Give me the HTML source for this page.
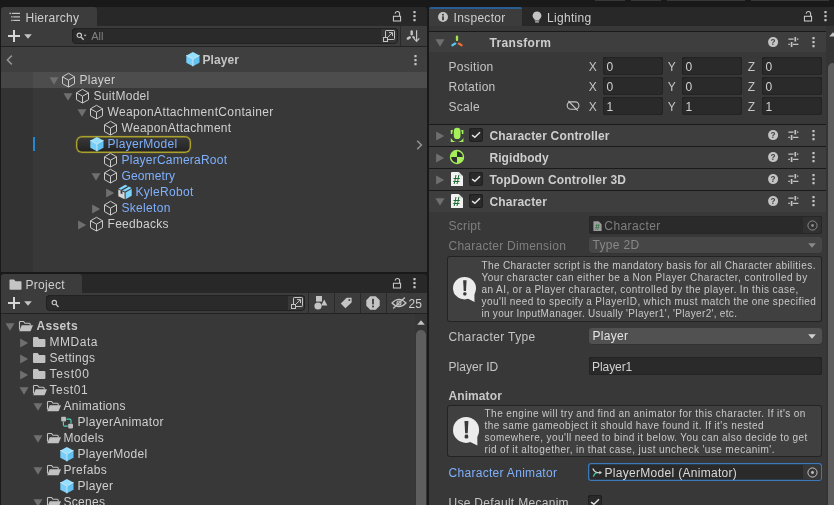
<!DOCTYPE html>
<html><head><meta charset="utf-8"><title>Unity Editor</title>
<style>
html,body{margin:0;padding:0;}
body{width:834px;height:505px;overflow:hidden;background:#191919;position:relative;font-family:"Liberation Sans",sans-serif;}
#root{position:absolute;left:0;top:0;width:834px;height:505px;overflow:hidden;will-change:transform;}
#root div,#root span,#root svg{position:absolute;}
.t{white-space:nowrap;}
.search{background:#2a2a2a;border-radius:4.5px;box-shadow:inset 0 0 0 1px #222, inset 0 1px 0 0 #121212;}
.field{background:#2a2a2a;border-radius:3px;box-shadow:inset 0 0 0 1px #232323, inset 0 1px 0 0 #151515;}
.drop{background:#515151;border-radius:3px;box-shadow:0 0.6px 0 0 #2c2c2c;}
</style></head><body><div id="root">
<div style="left:595px;top:0px;width:30px;height:1px;background:#383838;"></div>
<div style="left:631px;top:0px;width:30px;height:1px;background:#383838;"></div>
<div style="left:667px;top:0px;width:78px;height:1px;background:#383838;"></div>
<div style="left:751px;top:0px;width:78px;height:1px;background:#383838;"></div>
<div style="left:1px;top:7px;width:426px;height:19px;background:#282828;border-radius:3px 3px 0 0;"></div>
<div style="left:1px;top:7px;width:96px;height:19px;background:#3c3c3c;border-radius:3px 3px 0 0;"></div>
<svg style="left:9px;top:11.5px;" width="12" height="10" viewBox="0 0 12 10"><g fill="#c4c4c4"><rect x="0.5" y="0.7" width="1.4" height="1.4"/><rect x="2.8" y="0.8" width="8.2" height="1.2"/><rect x="2.2" y="4.2" width="1.4" height="1.4"/><rect x="4.2" y="4.3" width="6.8" height="1.2"/><rect x="2.2" y="7.7" width="1.4" height="1.4"/><rect x="4.2" y="7.8" width="6.8" height="1.2"/></g></svg>
<span class="t " style="left:25.5px;top:10px;line-height:16px;font-size:12px;font-weight:400;color:#cfcfcf;letter-spacing:0.26px;">Hierarchy</span>
<svg style="left:392px;top:10px;" width="11" height="13" viewBox="0 0 11 13"><rect x="1.45" y="6.3" width="7.1" height="4.7" fill="none" stroke="#c4c4c4" stroke-width="1.1"/><path d="M3.1 3.6 A2.25 2.25 0 0 1 7.6 4.05 V6" fill="none" stroke="#c4c4c4" stroke-width="1.1"/></svg>
<svg style="left:412.5px;top:11px;" width="3" height="11" viewBox="0 0 3 11"><rect x="0.4" y="0" width="2.2" height="2.3" rx="0.4" fill="#c4c4c4"/><rect x="0.4" y="4" width="2.2" height="2.3" rx="0.4" fill="#c4c4c4"/><rect x="0.4" y="8" width="2.2" height="2.3" rx="0.4" fill="#c4c4c4"/></svg>
<div style="left:1px;top:26px;width:426px;height:20px;background:#3c3c3c;"></div>
<div style="left:1px;top:46px;width:426px;height:1px;background:#232323;"></div>
<svg style="left:8px;top:30px;" width="12" height="12" viewBox="0 0 12 12"><path d="M6 0 V12 M0 6 H12" stroke="#d6d6d6" stroke-width="2"/></svg>
<svg style="left:24px;top:34px;" width="8" height="5" viewBox="0 0 8 5"><path d="M0.2 0.3 L7.8 0.3 L4 4.8 Z" fill="#c4c4c4"/></svg>
<div class="search" style="left:72px;top:28px;width:326px;height:16px;"></div>
<div style="left:381px;top:29px;width:16px;height:14px;background:#353535;border-radius:0 3px 3px 0;"></div>
<svg style="left:76px;top:31px;" width="12" height="10" viewBox="0 0 12 10"><circle cx="3.3" cy="4.3" r="2.2" fill="none" stroke="#c4c4c4" stroke-width="1.2"/><path d="M4.9 5.9 L7.7 8.8" stroke="#c4c4c4" stroke-width="1.4"/><path d="M7.6 3.7 h2.9 l-1.45 1.9 Z" fill="#c4c4c4"/></svg>
<span class="t " style="left:91.2px;top:28px;line-height:16px;font-size:11px;font-weight:400;color:#808080;letter-spacing:-0.012px;">All</span>
<svg style="left:383px;top:30px;" width="13" height="13" viewBox="0 0 13 13"><path d="M2.5 7 V1.2 a0.7 0.7 0 0 1 0.7 -0.7 H10.8 a0.7 0.7 0 0 1 0.7 0.7 V8.8 a0.7 0.7 0 0 1 -0.7 0.7 H5" fill="none" stroke="#c4c4c4" stroke-width="1"/><rect x="0.5" y="7.5" width="4" height="4" fill="none" stroke="#c4c4c4" stroke-width="1"/><path d="M4.8 7.3 L9.2 2.9 M6 2.6 H9.5 V6.1" fill="none" stroke="#c4c4c4" stroke-width="1"/></svg>
<div style="left:400px;top:26px;width:1px;height:20px;background:#2a2a2a;"></div>
<svg style="left:406px;top:29px;" width="15" height="14" viewBox="0 0 15 14"><g stroke="#c4c4c4" fill="none"><path d="M5.7 2.4 V5.2" stroke-width="2.4" stroke-linecap="round"/><path d="M3.8 8.4 L1.8 9.6" stroke-width="2.4" stroke-linecap="round"/><path d="M7.3 8.2 L7.9 8.6" stroke-width="2.2" stroke-linecap="round"/><path d="M10.6 1.2 V12.2 M7.9 9.4 L10.6 12.4 L13.3 9.4" stroke-width="1.2"/></g></svg>
<div style="left:1px;top:47px;width:426px;height:25px;background:#3f3f3f;"></div>
<svg style="left:6px;top:53.5px;" width="7" height="12" viewBox="0 0 7 12"><path d="M5.8 1.6 L1.4 6 L5.8 10.4" fill="none" stroke="#959595" stroke-width="1.5"/></svg>
<svg style="left:184.5px;top:51px;" width="16" height="16" viewBox="0 0 16 16"><path d="M7.9 0.9 L14.5 4.4 L7.9 8 L1.3 4.4 Z" fill="#96dfff"/><path d="M1.3 4.4 L7.9 8 L7.9 15.3 L1.3 11.7 Z" fill="#76cefa"/><path d="M14.5 4.4 L7.9 8 L7.9 15.3 L14.5 11.7 Z" fill="#62c1f1"/><path d="M1.3 4.4 L7.9 8 L14.5 4.4 M7.9 8 L7.9 15.3" fill="none" stroke="#d2f1ff" stroke-width="0.9"/></svg>
<span class="t " style="left:202.5px;top:52px;line-height:16px;font-size:12px;font-weight:700;color:#c6c6c6;letter-spacing:0.1px;">Player</span>
<svg style="left:413.5px;top:55px;" width="3" height="11" viewBox="0 0 3 11"><rect x="0.4" y="0" width="2.2" height="2.3" rx="0.4" fill="#c4c4c4"/><rect x="0.4" y="4" width="2.2" height="2.3" rx="0.4" fill="#c4c4c4"/><rect x="0.4" y="8" width="2.2" height="2.3" rx="0.4" fill="#c4c4c4"/></svg>
<div style="left:1px;top:72px;width:426px;height:200px;background:#383838;"></div>
<div style="left:1px;top:72px;width:32px;height:200px;background:#333333;"></div>
<div style="left:1px;top:72px;width:32px;height:16px;background:#464646;"></div>
<div style="left:33px;top:72px;width:394px;height:16px;background:#4d4d4d;"></div>
<div style="left:75.5px;top:135.5px;width:115.6px;height:17.5px;border-radius:6px;background:linear-gradient(#3a3a3a,#212121);box-shadow:inset 0 0 0 1.4px #aaa02e, 0 0 1.6px rgba(160,150,40,0.6);"></div>
<div style="left:33px;top:137px;width:2px;height:14px;background:#1f8bd6;"></div>
<svg style="left:48.5px;top:77px;" width="10" height="8" viewBox="0 0 10 8"><path d="M0.5 0.3 L9.5 0.3 L5 7.8 Z" fill="#6f6f6f"/></svg>
<svg style="left:60px;top:72px;" width="17" height="16" viewBox="0 0 17 16"><g fill="none" stroke="#cacaca" stroke-width="1" stroke-linejoin="round"><path d="M8.5 1.3 L14.5 4.8 L14.5 11.7 L8.5 15 L2.5 11.7 L2.5 4.8 Z"/><path d="M2.5 4.8 L8.5 8.2 L14.5 4.8 M8.5 8.2 L8.5 15"/></g></svg>
<span class="t " style="left:79.5px;top:72px;line-height:16px;font-size:12px;font-weight:400;color:#cfcfcf;letter-spacing:0.3px;">Player</span>
<svg style="left:62.5px;top:93px;" width="10" height="8" viewBox="0 0 10 8"><path d="M0.5 0.3 L9.5 0.3 L5 7.8 Z" fill="#6f6f6f"/></svg>
<svg style="left:74px;top:88px;" width="17" height="16" viewBox="0 0 17 16"><g fill="none" stroke="#cacaca" stroke-width="1" stroke-linejoin="round"><path d="M8.5 1.3 L14.5 4.8 L14.5 11.7 L8.5 15 L2.5 11.7 L2.5 4.8 Z"/><path d="M2.5 4.8 L8.5 8.2 L14.5 4.8 M8.5 8.2 L8.5 15"/></g></svg>
<span class="t " style="left:93.5px;top:88px;line-height:16px;font-size:12px;font-weight:400;color:#cfcfcf;letter-spacing:0.3px;">SuitModel</span>
<svg style="left:76.5px;top:109px;" width="10" height="8" viewBox="0 0 10 8"><path d="M0.5 0.3 L9.5 0.3 L5 7.8 Z" fill="#6f6f6f"/></svg>
<svg style="left:88px;top:104px;" width="17" height="16" viewBox="0 0 17 16"><g fill="none" stroke="#cacaca" stroke-width="1" stroke-linejoin="round"><path d="M8.5 1.3 L14.5 4.8 L14.5 11.7 L8.5 15 L2.5 11.7 L2.5 4.8 Z"/><path d="M2.5 4.8 L8.5 8.2 L14.5 4.8 M8.5 8.2 L8.5 15"/></g></svg>
<span class="t " style="left:107.5px;top:104px;line-height:16px;font-size:12px;font-weight:400;color:#cfcfcf;letter-spacing:0.354px;">WeaponAttachmentContainer</span>
<svg style="left:102px;top:120px;" width="17" height="16" viewBox="0 0 17 16"><g fill="none" stroke="#cacaca" stroke-width="1" stroke-linejoin="round"><path d="M8.5 1.3 L14.5 4.8 L14.5 11.7 L8.5 15 L2.5 11.7 L2.5 4.8 Z"/><path d="M2.5 4.8 L8.5 8.2 L14.5 4.8 M8.5 8.2 L8.5 15"/></g></svg>
<span class="t " style="left:121.5px;top:120px;line-height:16px;font-size:12px;font-weight:400;color:#cfcfcf;letter-spacing:0.3px;">WeaponAttachment</span>
<svg style="left:88.5px;top:136px;" width="16" height="16" viewBox="0 0 16 16"><path d="M7.9 0.9 L14.5 4.4 L7.9 8 L1.3 4.4 Z" fill="#96dfff"/><path d="M1.3 4.4 L7.9 8 L7.9 15.3 L1.3 11.7 Z" fill="#76cefa"/><path d="M14.5 4.4 L7.9 8 L7.9 15.3 L14.5 11.7 Z" fill="#62c1f1"/><path d="M1.3 4.4 L7.9 8 L14.5 4.4 M7.9 8 L7.9 15.3" fill="none" stroke="#d2f1ff" stroke-width="0.9"/></svg>
<span class="t " style="left:107.5px;top:136px;line-height:16px;font-size:12px;font-weight:400;color:#7fb0fc;letter-spacing:0.3px;">PlayerModel</span>
<svg style="left:102px;top:152px;" width="17" height="16" viewBox="0 0 17 16"><g fill="none" stroke="#cacaca" stroke-width="1" stroke-linejoin="round"><path d="M8.5 1.3 L14.5 4.8 L14.5 11.7 L8.5 15 L2.5 11.7 L2.5 4.8 Z"/><path d="M2.5 4.8 L8.5 8.2 L14.5 4.8 M8.5 8.2 L8.5 15"/></g></svg>
<span class="t " style="left:121.5px;top:152px;line-height:16px;font-size:12px;font-weight:400;color:#7fb0fc;letter-spacing:0.231px;">PlayerCameraRoot</span>
<svg style="left:90.5px;top:173px;" width="10" height="8" viewBox="0 0 10 8"><path d="M0.5 0.3 L9.5 0.3 L5 7.8 Z" fill="#6f6f6f"/></svg>
<svg style="left:102px;top:168px;" width="17" height="16" viewBox="0 0 17 16"><g fill="none" stroke="#cacaca" stroke-width="1" stroke-linejoin="round"><path d="M8.5 1.3 L14.5 4.8 L14.5 11.7 L8.5 15 L2.5 11.7 L2.5 4.8 Z"/><path d="M2.5 4.8 L8.5 8.2 L14.5 4.8 M8.5 8.2 L8.5 15"/></g></svg>
<span class="t " style="left:121.5px;top:168px;line-height:16px;font-size:12px;font-weight:400;color:#7fb0fc;letter-spacing:0.117px;">Geometry</span>
<svg style="left:106.0px;top:187.5px;" width="9" height="10" viewBox="0 0 9 10"><path d="M0.1 0.4 L0.1 9.6 L8.2 5 Z" fill="#6f6f6f"/></svg>
<svg style="left:116.5px;top:184px;" width="16" height="16" viewBox="0 0 16 16"><path d="M1.4 4.7 L8.2 0.8 L14.7 4 L8 7.6 Z" fill="#82d7fd"/><path d="M4.5 6.3 L11.5 2.3" stroke="#353535" stroke-width="1.3"/><path d="M1.3 5.5 L7.6 8.5 L7.6 15.2 L1.3 12.2 Z" fill="#d6d6d6"/><path d="M3.6 6.6 L5.4 7.5 L5.4 10.6 L4.5 9.5 L3.6 9.9 Z" fill="#333333"/><path d="M8.6 8.4 L14.7 5 L14.7 11.8 L8.6 15.3 Z" fill="#7dd4fc"/></svg>
<span class="t " style="left:135.5px;top:184px;line-height:16px;font-size:12px;font-weight:400;color:#7fb0fc;letter-spacing:0.3px;">KyleRobot</span>
<svg style="left:92.0px;top:203.5px;" width="9" height="10" viewBox="0 0 9 10"><path d="M0.1 0.4 L0.1 9.6 L8.2 5 Z" fill="#6f6f6f"/></svg>
<svg style="left:102px;top:200px;" width="17" height="16" viewBox="0 0 17 16"><g fill="none" stroke="#cacaca" stroke-width="1" stroke-linejoin="round"><path d="M8.5 1.3 L14.5 4.8 L14.5 11.7 L8.5 15 L2.5 11.7 L2.5 4.8 Z"/><path d="M2.5 4.8 L8.5 8.2 L14.5 4.8 M8.5 8.2 L8.5 15"/></g></svg>
<span class="t " style="left:121.5px;top:200px;line-height:16px;font-size:12px;font-weight:400;color:#7fb0fc;letter-spacing:0.3px;">Skeleton</span>
<svg style="left:78.0px;top:219.5px;" width="9" height="10" viewBox="0 0 9 10"><path d="M0.1 0.4 L0.1 9.6 L8.2 5 Z" fill="#6f6f6f"/></svg>
<svg style="left:88px;top:216px;" width="17" height="16" viewBox="0 0 17 16"><g fill="none" stroke="#cacaca" stroke-width="1" stroke-linejoin="round"><path d="M8.5 1.3 L14.5 4.8 L14.5 11.7 L8.5 15 L2.5 11.7 L2.5 4.8 Z"/><path d="M2.5 4.8 L8.5 8.2 L14.5 4.8 M8.5 8.2 L8.5 15"/></g></svg>
<span class="t " style="left:107.5px;top:216px;line-height:16px;font-size:12px;font-weight:400;color:#cfcfcf;letter-spacing:0.3px;">Feedbacks</span>
<svg style="left:416px;top:138.5px;" width="7" height="12" viewBox="0 0 7 12"><path d="M1.2 1.8 L5.4 6 L1.2 10.2" fill="none" stroke="#959595" stroke-width="1.5"/></svg>
<div style="left:1px;top:274px;width:426px;height:19px;background:#282828;border-radius:3px 3px 0 0;"></div>
<div style="left:1px;top:274px;width:81px;height:19px;background:#3c3c3c;border-radius:3px 3px 0 0;"></div>
<svg style="left:8.5px;top:278.5px;" width="13" height="11" viewBox="0 0 13 11"><path d="M0.5 1.2 a0.8 0.8 0 0 1 0.8 -0.8 h3.8 l1.4 1.8 h5.2 a0.8 0.8 0 0 1 0.8 0.8 v7 a0.8 0.8 0 0 1 -0.8 0.8 h-10.4 a0.8 0.8 0 0 1 -0.8 -0.8 Z" fill="#c4c4c4"/></svg>
<span class="t " style="left:25.5px;top:277px;line-height:16px;font-size:12px;font-weight:400;color:#cfcfcf;letter-spacing:0.3px;">Project</span>
<svg style="left:392px;top:277px;" width="11" height="13" viewBox="0 0 11 13"><rect x="1.45" y="6.3" width="7.1" height="4.7" fill="none" stroke="#c4c4c4" stroke-width="1.1"/><path d="M3.1 3.6 A2.25 2.25 0 0 1 7.6 4.05 V6" fill="none" stroke="#c4c4c4" stroke-width="1.1"/></svg>
<svg style="left:412.5px;top:278px;" width="3" height="11" viewBox="0 0 3 11"><rect x="0.4" y="0" width="2.2" height="2.3" rx="0.4" fill="#c4c4c4"/><rect x="0.4" y="4" width="2.2" height="2.3" rx="0.4" fill="#c4c4c4"/><rect x="0.4" y="8" width="2.2" height="2.3" rx="0.4" fill="#c4c4c4"/></svg>
<div style="left:1px;top:293px;width:426px;height:20px;background:#3c3c3c;"></div>
<div style="left:1px;top:313px;width:426px;height:1px;background:#232323;"></div>
<svg style="left:8px;top:297px;" width="12" height="12" viewBox="0 0 12 12"><path d="M6 0 V12 M0 6 H12" stroke="#d6d6d6" stroke-width="2"/></svg>
<svg style="left:24px;top:301px;" width="8" height="5" viewBox="0 0 8 5"><path d="M0.2 0.3 L7.8 0.3 L4 4.8 Z" fill="#c4c4c4"/></svg>
<div class="search" style="left:46px;top:295px;width:259px;height:16px;"></div>
<div style="left:288px;top:296px;width:16px;height:14px;background:#383838;border-radius:0 3px 3px 0;"></div>
<svg style="left:50.5px;top:298.8px;" width="10" height="10" viewBox="0 0 10 10"><circle cx="3.3" cy="3.6" r="2.2" fill="none" stroke="#c4c4c4" stroke-width="1.1"/><path d="M5 5.3 L7.5 8" stroke="#c4c4c4" stroke-width="1.3"/></svg>
<svg style="left:291px;top:297px;" width="13" height="13" viewBox="0 0 13 13"><path d="M2.5 7 V1.2 a0.7 0.7 0 0 1 0.7 -0.7 H10.8 a0.7 0.7 0 0 1 0.7 0.7 V8.8 a0.7 0.7 0 0 1 -0.7 0.7 H5" fill="none" stroke="#c4c4c4" stroke-width="1"/><rect x="0.5" y="7.5" width="4" height="4" fill="none" stroke="#c4c4c4" stroke-width="1"/><path d="M4.8 7.3 L9.2 2.9 M6 2.6 H9.5 V6.1" fill="none" stroke="#c4c4c4" stroke-width="1"/></svg>
<div style="left:308px;top:293px;width:1px;height:20px;background:#2a2a2a;"></div>
<div style="left:334px;top:293px;width:1px;height:20px;background:#2a2a2a;"></div>
<div style="left:360px;top:293px;width:1px;height:20px;background:#2a2a2a;"></div>
<div style="left:386px;top:293px;width:1px;height:20px;background:#2a2a2a;"></div>
<svg style="left:314px;top:296px;" width="14" height="14" viewBox="0 0 14 14"><rect x="2" y="0" width="6" height="5.6" fill="#c4c4c4"/><circle cx="4" cy="10" r="3.6" fill="#c4c4c4"/><path d="M10.2 3.6 L13.4 9.6 H7.2 Z" fill="#c4c4c4"/></svg>
<svg style="left:340px;top:297px;" width="13" height="12" viewBox="0 0 13 12"><path d="M6.6 0.8 H11.6 V5.6 L5.4 11.2 L0.8 6.4 Z" fill="#c4c4c4"/><circle cx="9.4" cy="3" r="1" fill="#3c3c3c"/></svg>
<svg style="left:366px;top:296px;" width="14" height="14" viewBox="0 0 14 14"><path d="M4.2 0.3 H9.8 L13.7 4.2 V9.8 L9.8 13.7 H4.2 L0.3 9.8 V4.2 Z" fill="#c4c4c4"/><rect x="6.1" y="2.8" width="1.8" height="5.6" fill="#3c3c3c"/><rect x="6.1" y="9.6" width="1.8" height="1.8" fill="#3c3c3c"/></svg>
<svg style="left:391px;top:297px;" width="16" height="12" viewBox="0 0 16 12"><path d="M1 6 Q8 -1.2 15 6 Q8 13.2 1 6 Z" fill="none" stroke="#c4c4c4" stroke-width="1.2"/><circle cx="8" cy="6" r="2" fill="none" stroke="#c4c4c4" stroke-width="1.1"/><path d="M2.2 11.4 L13.8 0.6" stroke="#c4c4c4" stroke-width="1.3"/></svg>
<span class="t " style="left:408.5px;top:296px;line-height:16px;font-size:12px;font-weight:400;color:#cfcfcf;letter-spacing:0.2px;">25</span>
<div style="left:1px;top:314px;width:426px;height:191px;background:#383838;"></div>
<div style="left:415px;top:314px;width:12px;height:191px;background:#353535;"></div>
<svg style="left:417px;top:320px;" width="8" height="5" viewBox="0 0 8 5"><path d="M0.2 4.8 L7.8 4.8 L4 0.3 Z" fill="#c4c4c4"/></svg>
<div style="left:416px;top:330px;width:10px;height:200px;background:#5e5e5e;border-radius:5px;"></div>
<svg style="left:4.5px;top:323px;" width="10" height="8" viewBox="0 0 10 8"><path d="M0.5 0.3 L9.5 0.3 L5 7.8 Z" fill="#6f6f6f"/></svg>
<svg style="left:18px;top:318px;" width="16" height="16" viewBox="0 0 16 16"><path d="M1.5 11.5 V4.3 a0.8 0.8 0 0 1 0.8 -0.8 h3.3 l1.3 1.8 h4.5 a0.8 0.8 0 0 1 0.8 0.8 v1.2" fill="none" stroke="#c2c2c2" stroke-width="1.1" stroke-linejoin="round"/><path d="M3.7 7.2 H15 L12.9 12.6 a0.9 0.9 0 0 1 -0.8 0.6 H1.2 Z" fill="#c2c2c2"/></svg>
<span class="t " style="left:36.5px;top:318px;line-height:16px;font-size:12px;font-weight:700;color:#c9c9c9;letter-spacing:0.349px;">Assets</span>
<svg style="left:20.0px;top:337.5px;" width="9" height="10" viewBox="0 0 9 10"><path d="M0.1 0.4 L0.1 9.6 L8.2 5 Z" fill="#6f6f6f"/></svg>
<svg style="left:32px;top:334px;" width="16" height="16" viewBox="0 0 16 16"><path d="M1 4 a1 1 0 0 1 1 -1 h3.7 l1.4 2 h5.3 a1 1 0 0 1 1 1 v6 a1 1 0 0 1 -1 1 h-10.4 a1 1 0 0 1 -1 -1 Z" fill="#c2c2c2"/></svg>
<span class="t " style="left:49.5px;top:334px;line-height:16px;font-size:12px;font-weight:400;color:#cfcfcf;letter-spacing:0.512px;">MMData</span>
<svg style="left:20.0px;top:353.5px;" width="9" height="10" viewBox="0 0 9 10"><path d="M0.1 0.4 L0.1 9.6 L8.2 5 Z" fill="#6f6f6f"/></svg>
<svg style="left:32px;top:350px;" width="16" height="16" viewBox="0 0 16 16"><path d="M1 4 a1 1 0 0 1 1 -1 h3.7 l1.4 2 h5.3 a1 1 0 0 1 1 1 v6 a1 1 0 0 1 -1 1 h-10.4 a1 1 0 0 1 -1 -1 Z" fill="#c2c2c2"/></svg>
<span class="t " style="left:49.5px;top:350px;line-height:16px;font-size:12px;font-weight:400;color:#cfcfcf;letter-spacing:0.3px;">Settings</span>
<svg style="left:20.0px;top:369.5px;" width="9" height="10" viewBox="0 0 9 10"><path d="M0.1 0.4 L0.1 9.6 L8.2 5 Z" fill="#6f6f6f"/></svg>
<svg style="left:32px;top:366px;" width="16" height="16" viewBox="0 0 16 16"><path d="M1 4 a1 1 0 0 1 1 -1 h3.7 l1.4 2 h5.3 a1 1 0 0 1 1 1 v6 a1 1 0 0 1 -1 1 h-10.4 a1 1 0 0 1 -1 -1 Z" fill="#c2c2c2"/></svg>
<span class="t " style="left:49.5px;top:366px;line-height:16px;font-size:12px;font-weight:400;color:#cfcfcf;letter-spacing:0.829px;">Test00</span>
<svg style="left:18.5px;top:387px;" width="10" height="8" viewBox="0 0 10 8"><path d="M0.5 0.3 L9.5 0.3 L5 7.8 Z" fill="#6f6f6f"/></svg>
<svg style="left:32px;top:382px;" width="16" height="16" viewBox="0 0 16 16"><path d="M1.5 11.5 V4.3 a0.8 0.8 0 0 1 0.8 -0.8 h3.3 l1.3 1.8 h4.5 a0.8 0.8 0 0 1 0.8 0.8 v1.2" fill="none" stroke="#c2c2c2" stroke-width="1.1" stroke-linejoin="round"/><path d="M3.7 7.2 H15 L12.9 12.6 a0.9 0.9 0 0 1 -0.8 0.6 H1.2 Z" fill="#c2c2c2"/></svg>
<span class="t " style="left:49.5px;top:382px;line-height:16px;font-size:12px;font-weight:400;color:#cfcfcf;letter-spacing:0.549px;">Test01</span>
<svg style="left:32.5px;top:403px;" width="10" height="8" viewBox="0 0 10 8"><path d="M0.5 0.3 L9.5 0.3 L5 7.8 Z" fill="#6f6f6f"/></svg>
<svg style="left:46px;top:398px;" width="16" height="16" viewBox="0 0 16 16"><path d="M1.5 11.5 V4.3 a0.8 0.8 0 0 1 0.8 -0.8 h3.3 l1.3 1.8 h4.5 a0.8 0.8 0 0 1 0.8 0.8 v1.2" fill="none" stroke="#c2c2c2" stroke-width="1.1" stroke-linejoin="round"/><path d="M3.7 7.2 H15 L12.9 12.6 a0.9 0.9 0 0 1 -0.8 0.6 H1.2 Z" fill="#c2c2c2"/></svg>
<span class="t " style="left:63.5px;top:398px;line-height:16px;font-size:12px;font-weight:400;color:#cfcfcf;letter-spacing:0.3px;">Animations</span>
<svg style="left:59px;top:413.5px;" width="16" height="16" viewBox="0 0 16 16"><rect x="2.2" y="2.8" width="4.8" height="4.6" rx="0.8" fill="#bcbcbc"/><rect x="9.2" y="9.8" width="4.8" height="4.6" rx="0.8" fill="#bcbcbc"/><g fill="none" stroke="#4fd6be" stroke-width="1.1"><path d="M7.4 5.1 H10.6 a1.4 1.4 0 0 1 1.4 1.4 V9.4"/><path d="M8.8 12.1 H5.8 a1.4 1.4 0 0 1 -1.4 -1.4 V7.8"/></g></svg>
<span class="t " style="left:77.5px;top:414px;line-height:16px;font-size:12px;font-weight:400;color:#cfcfcf;letter-spacing:0.3px;">PlayerAnimator</span>
<svg style="left:32.5px;top:435px;" width="10" height="8" viewBox="0 0 10 8"><path d="M0.5 0.3 L9.5 0.3 L5 7.8 Z" fill="#6f6f6f"/></svg>
<svg style="left:46px;top:430px;" width="16" height="16" viewBox="0 0 16 16"><path d="M1.5 11.5 V4.3 a0.8 0.8 0 0 1 0.8 -0.8 h3.3 l1.3 1.8 h4.5 a0.8 0.8 0 0 1 0.8 0.8 v1.2" fill="none" stroke="#c2c2c2" stroke-width="1.1" stroke-linejoin="round"/><path d="M3.7 7.2 H15 L12.9 12.6 a0.9 0.9 0 0 1 -0.8 0.6 H1.2 Z" fill="#c2c2c2"/></svg>
<span class="t " style="left:63.5px;top:430px;line-height:16px;font-size:12px;font-weight:400;color:#cfcfcf;letter-spacing:0.3px;">Models</span>
<svg style="left:58.5px;top:446px;" width="16" height="16" viewBox="0 0 16 16"><path d="M7.9 0.9 L14.5 4.4 L7.9 8 L1.3 4.4 Z" fill="#96dfff"/><path d="M1.3 4.4 L7.9 8 L7.9 15.3 L1.3 11.7 Z" fill="#76cefa"/><path d="M14.5 4.4 L7.9 8 L7.9 15.3 L14.5 11.7 Z" fill="#62c1f1"/><path d="M1.3 4.4 L7.9 8 L14.5 4.4 M7.9 8 L7.9 15.3" fill="none" stroke="#d2f1ff" stroke-width="0.9"/></svg>
<span class="t " style="left:77.5px;top:446px;line-height:16px;font-size:12px;font-weight:400;color:#cfcfcf;letter-spacing:0.3px;">PlayerModel</span>
<svg style="left:32.5px;top:467px;" width="10" height="8" viewBox="0 0 10 8"><path d="M0.5 0.3 L9.5 0.3 L5 7.8 Z" fill="#6f6f6f"/></svg>
<svg style="left:46px;top:462px;" width="16" height="16" viewBox="0 0 16 16"><path d="M1.5 11.5 V4.3 a0.8 0.8 0 0 1 0.8 -0.8 h3.3 l1.3 1.8 h4.5 a0.8 0.8 0 0 1 0.8 0.8 v1.2" fill="none" stroke="#c2c2c2" stroke-width="1.1" stroke-linejoin="round"/><path d="M3.7 7.2 H15 L12.9 12.6 a0.9 0.9 0 0 1 -0.8 0.6 H1.2 Z" fill="#c2c2c2"/></svg>
<span class="t " style="left:63.5px;top:462px;line-height:16px;font-size:12px;font-weight:400;color:#cfcfcf;letter-spacing:0.3px;">Prefabs</span>
<svg style="left:58.5px;top:478px;" width="16" height="16" viewBox="0 0 16 16"><path d="M7.9 0.9 L14.5 4.4 L7.9 8 L1.3 4.4 Z" fill="#96dfff"/><path d="M1.3 4.4 L7.9 8 L7.9 15.3 L1.3 11.7 Z" fill="#76cefa"/><path d="M14.5 4.4 L7.9 8 L7.9 15.3 L14.5 11.7 Z" fill="#62c1f1"/><path d="M1.3 4.4 L7.9 8 L14.5 4.4 M7.9 8 L7.9 15.3" fill="none" stroke="#d2f1ff" stroke-width="0.9"/></svg>
<span class="t " style="left:77.5px;top:478px;line-height:16px;font-size:12px;font-weight:400;color:#cfcfcf;letter-spacing:0.3px;">Player</span>
<svg style="left:32.5px;top:499px;" width="10" height="8" viewBox="0 0 10 8"><path d="M0.5 0.3 L9.5 0.3 L5 7.8 Z" fill="#6f6f6f"/></svg>
<svg style="left:46px;top:494px;" width="16" height="16" viewBox="0 0 16 16"><path d="M1.5 11.5 V4.3 a0.8 0.8 0 0 1 0.8 -0.8 h3.3 l1.3 1.8 h4.5 a0.8 0.8 0 0 1 0.8 0.8 v1.2" fill="none" stroke="#c2c2c2" stroke-width="1.1" stroke-linejoin="round"/><path d="M3.7 7.2 H15 L12.9 12.6 a0.9 0.9 0 0 1 -0.8 0.6 H1.2 Z" fill="#c2c2c2"/></svg>
<span class="t " style="left:63.5px;top:494px;line-height:16px;font-size:12px;font-weight:400;color:#cfcfcf;letter-spacing:0.3px;">Scenes</span>
<div style="left:429px;top:7px;width:405px;height:19px;background:#282828;border-radius:3px 0 0 0;"></div>
<div style="left:429px;top:7px;width:93px;height:19px;background:#3c3c3c;border-radius:3px 3px 0 0;"></div>
<div style="left:429px;top:7px;width:93px;height:2px;background:#2a5e92;border-radius:3px 3px 0 0;"></div>
<svg style="left:438px;top:12px;" width="11" height="11" viewBox="0 0 11 11"><circle cx="5" cy="5" r="5" fill="#c4c4c4"/><rect x="4.1" y="4.3" width="1.8" height="3.9" fill="#3c3c3c"/><rect x="4.1" y="1.9" width="1.8" height="1.6" fill="#3c3c3c"/></svg>
<span class="t " style="left:453.5px;top:10px;line-height:16px;font-size:12px;font-weight:400;color:#cfcfcf;letter-spacing:0.3px;">Inspector</span>
<svg style="left:531.5px;top:11px;" width="10" height="12" viewBox="0 0 10 12"><path d="M5 0.4 a4.3 4.3 0 0 1 2.4 7.9 v1.3 h-4.8 v-1.3 a4.3 4.3 0 0 1 2.4 -7.9 Z" fill="#c4c4c4"/><rect x="3" y="10.2" width="4" height="1.4" rx="0.6" fill="#c4c4c4"/></svg>
<span class="t " style="left:547px;top:10px;line-height:16px;font-size:12px;font-weight:400;color:#cfcfcf;letter-spacing:0.3px;">Lighting</span>
<svg style="left:803px;top:10px;" width="11" height="13" viewBox="0 0 11 13"><rect x="1.45" y="6.3" width="7.1" height="4.7" fill="none" stroke="#c4c4c4" stroke-width="1.1"/><path d="M3.1 3.6 A2.25 2.25 0 0 1 7.6 4.05 V6" fill="none" stroke="#c4c4c4" stroke-width="1.1"/></svg>
<svg style="left:823.5px;top:11px;" width="3" height="11" viewBox="0 0 3 11"><rect x="0.4" y="0" width="2.2" height="2.3" rx="0.4" fill="#c4c4c4"/><rect x="0.4" y="4" width="2.2" height="2.3" rx="0.4" fill="#c4c4c4"/><rect x="0.4" y="8" width="2.2" height="2.3" rx="0.4" fill="#c4c4c4"/></svg>
<div style="left:429px;top:26px;width:405px;height:479px;background:#383838;"></div>
<div style="left:826px;top:26px;width:8px;height:479px;background:#343434;"></div>
<svg style="left:829px;top:31.5px;" width="8" height="5" viewBox="0 0 8 5"><path d="M0.2 4.6 L7.8 4.6 L4 0.3 Z" fill="#c4c4c4"/></svg>
<div style="left:828px;top:62.5px;width:10px;height:460px;background:#5e5e5e;border-radius:5px;"></div>
<div style="left:429px;top:31px;width:397px;height:1px;background:#1a1a1a;"></div>
<div style="left:429px;top:32px;width:397px;height:20px;background:#3e3e3e;"></div>
<svg style="left:434.5px;top:39.0px;" width="10" height="8" viewBox="0 0 10 8"><path d="M0.5 0.3 L9.5 0.3 L5 7.8 Z" fill="#6f6f6f"/></svg>
<svg style="left:449px;top:34px;" width="16" height="16" viewBox="0 0 16 16"><g stroke-linecap="round" stroke-width="2.3" fill="none"><path d="M8 2.6 V6" stroke="#a5e84a"/><path d="M6.2 9.6 L3.4 11.2" stroke="#58c4f2"/><path d="M9.8 9.6 L12.6 11.2" stroke="#ee6b3a"/></g></svg>
<span class="t " style="left:489.5px;top:35px;line-height:16px;font-size:12px;font-weight:700;color:#cecece;letter-spacing:0.327px;">Transform</span>
<svg style="left:768px;top:37px;" width="11" height="11" viewBox="0 0 11 11"><circle cx="5.1" cy="5.1" r="5" fill="#c4c4c4"/><text x="5.1" y="8.1" font-size="8.2" font-weight="700" text-anchor="middle" fill="#3e3e3e" font-family="Liberation Sans, sans-serif">?</text></svg>
<svg style="left:788px;top:37px;" width="11" height="11" viewBox="0 0 11 11"><path d="M0.4 2.1 H5.6 M9 2.1 H10.4 M0.3 7.4 H1.9 M5 7.4 H10.4" stroke="#c4c4c4" stroke-width="1.2"/><path d="M7.3 0 V4.6 M3.6 5 V10" stroke="#c4c4c4" stroke-width="1.7"/></svg>
<svg style="left:811.6px;top:36.8px;" width="3" height="11" viewBox="0 0 3 11"><rect x="0.4" y="0" width="2.2" height="2.3" rx="0.4" fill="#c4c4c4"/><rect x="0.4" y="4" width="2.2" height="2.3" rx="0.4" fill="#c4c4c4"/><rect x="0.4" y="8" width="2.2" height="2.3" rx="0.4" fill="#c4c4c4"/></svg>
<span class="t " style="left:448.5px;top:59px;line-height:16px;font-size:12px;font-weight:400;color:#c4c4c4;letter-spacing:0.3px;">Position</span>
<span class="t " style="left:588.7px;top:59px;line-height:16px;font-size:12px;font-weight:400;color:#c4c4c4;letter-spacing:0px;">X</span>
<div class="field" style="left:603px;top:57px;width:60px;height:17.5px;"></div>
<span class="t " style="left:606.5px;top:59px;line-height:16px;font-size:12px;font-weight:400;color:#d2d2d2;letter-spacing:0px;">0</span>
<span class="t " style="left:667.7px;top:59px;line-height:16px;font-size:12px;font-weight:400;color:#c4c4c4;letter-spacing:0px;">Y</span>
<div class="field" style="left:682px;top:57px;width:60px;height:17.5px;"></div>
<span class="t " style="left:685.5px;top:59px;line-height:16px;font-size:12px;font-weight:400;color:#d2d2d2;letter-spacing:0px;">0</span>
<span class="t " style="left:747.7px;top:59px;line-height:16px;font-size:12px;font-weight:400;color:#c4c4c4;letter-spacing:0px;">Z</span>
<div class="field" style="left:762px;top:57px;width:60px;height:17.5px;"></div>
<span class="t " style="left:765.5px;top:59px;line-height:16px;font-size:12px;font-weight:400;color:#d2d2d2;letter-spacing:0px;">0</span>
<span class="t " style="left:448.5px;top:79px;line-height:16px;font-size:12px;font-weight:400;color:#c4c4c4;letter-spacing:0.3px;">Rotation</span>
<span class="t " style="left:588.7px;top:79px;line-height:16px;font-size:12px;font-weight:400;color:#c4c4c4;letter-spacing:0px;">X</span>
<div class="field" style="left:603px;top:77px;width:60px;height:17.5px;"></div>
<span class="t " style="left:606.5px;top:79px;line-height:16px;font-size:12px;font-weight:400;color:#d2d2d2;letter-spacing:0px;">0</span>
<span class="t " style="left:667.7px;top:79px;line-height:16px;font-size:12px;font-weight:400;color:#c4c4c4;letter-spacing:0px;">Y</span>
<div class="field" style="left:682px;top:77px;width:60px;height:17.5px;"></div>
<span class="t " style="left:685.5px;top:79px;line-height:16px;font-size:12px;font-weight:400;color:#d2d2d2;letter-spacing:0px;">0</span>
<span class="t " style="left:747.7px;top:79px;line-height:16px;font-size:12px;font-weight:400;color:#c4c4c4;letter-spacing:0px;">Z</span>
<div class="field" style="left:762px;top:77px;width:60px;height:17.5px;"></div>
<span class="t " style="left:765.5px;top:79px;line-height:16px;font-size:12px;font-weight:400;color:#d2d2d2;letter-spacing:0px;">0</span>
<span class="t " style="left:448.5px;top:99px;line-height:16px;font-size:12px;font-weight:400;color:#c4c4c4;letter-spacing:0.3px;">Scale</span>
<span class="t " style="left:588.7px;top:99px;line-height:16px;font-size:12px;font-weight:400;color:#c4c4c4;letter-spacing:0px;">X</span>
<div class="field" style="left:603px;top:97px;width:60px;height:17.5px;"></div>
<span class="t " style="left:606.5px;top:99px;line-height:16px;font-size:12px;font-weight:400;color:#d2d2d2;letter-spacing:0px;">1</span>
<span class="t " style="left:667.7px;top:99px;line-height:16px;font-size:12px;font-weight:400;color:#c4c4c4;letter-spacing:0px;">Y</span>
<div class="field" style="left:682px;top:97px;width:60px;height:17.5px;"></div>
<span class="t " style="left:685.5px;top:99px;line-height:16px;font-size:12px;font-weight:400;color:#d2d2d2;letter-spacing:0px;">1</span>
<span class="t " style="left:747.7px;top:99px;line-height:16px;font-size:12px;font-weight:400;color:#c4c4c4;letter-spacing:0px;">Z</span>
<div class="field" style="left:762px;top:97px;width:60px;height:17.5px;"></div>
<span class="t " style="left:765.5px;top:99px;line-height:16px;font-size:12px;font-weight:400;color:#d2d2d2;letter-spacing:0px;">1</span>
<svg style="left:566px;top:100px;" width="14" height="12" viewBox="0 0 14 12"><g fill="none" stroke="#c4c4c4" stroke-width="1.1"><rect x="1.2" y="1.9" width="11.7" height="7.4" rx="3.7"/><path d="M2.4 1 L11.8 10.6"/></g></svg>
<div style="left:429px;top:124px;width:397px;height:1px;background:#1a1a1a;"></div>
<div style="left:429px;top:125px;width:397px;height:21px;background:#3e3e3e;"></div>
<svg style="left:436px;top:130.5px;" width="9" height="10" viewBox="0 0 9 10"><path d="M0.1 0.4 L0.1 9.6 L8.2 5 Z" fill="#6f6f6f"/></svg>
<svg style="left:449px;top:127px;" width="16" height="16" viewBox="0 0 16 16"><g fill="#a5ef5a"><rect x="4.8" y="0.7" width="6.7" height="11.4" rx="3.35"/><path d="M1.8 3 H4 L3.6 4.6 L3.2 7 H1.8 Z"/><path d="M14.4 3 H12.2 L12.6 4.6 L13 7 H14.4 Z"/><path d="M1.8 10.8 V14.9 H7.4 Q3.2 14.4 1.8 10.8 Z"/><path d="M14.4 10.8 V14.9 H8.8 Q13 14.4 14.4 10.8 Z"/></g></svg>
<div style="left:469px;top:128px;width:14px;height:14px;background:#2a2a2a;border-radius:3px;box-shadow:inset 0 0 0 1px #202020, inset 0 1px 0 0 #161616;"></div>
<svg style="left:469px;top:128px;" width="14" height="14" viewBox="0 0 14 14"><path d="M3.1 7.1 L5.9 9.3 L11 4.3" fill="none" stroke="#e4e4e4" stroke-width="1.5"/></svg>
<span class="t " style="left:489.5px;top:128px;line-height:16px;font-size:12px;font-weight:700;color:#cecece;letter-spacing:0.17px;">Character Controller</span>
<svg style="left:768px;top:130px;" width="11" height="11" viewBox="0 0 11 11"><circle cx="5.1" cy="5.1" r="5" fill="#c4c4c4"/><text x="5.1" y="8.1" font-size="8.2" font-weight="700" text-anchor="middle" fill="#3e3e3e" font-family="Liberation Sans, sans-serif">?</text></svg>
<svg style="left:788px;top:130px;" width="11" height="11" viewBox="0 0 11 11"><path d="M0.4 2.1 H5.6 M9 2.1 H10.4 M0.3 7.4 H1.9 M5 7.4 H10.4" stroke="#c4c4c4" stroke-width="1.2"/><path d="M7.3 0 V4.6 M3.6 5 V10" stroke="#c4c4c4" stroke-width="1.7"/></svg>
<svg style="left:811.6px;top:129.8px;" width="3" height="11" viewBox="0 0 3 11"><rect x="0.4" y="0" width="2.2" height="2.3" rx="0.4" fill="#c4c4c4"/><rect x="0.4" y="4" width="2.2" height="2.3" rx="0.4" fill="#c4c4c4"/><rect x="0.4" y="8" width="2.2" height="2.3" rx="0.4" fill="#c4c4c4"/></svg>
<div style="left:429px;top:146px;width:397px;height:1px;background:#1a1a1a;"></div>
<div style="left:429px;top:147px;width:397px;height:21px;background:#3e3e3e;"></div>
<svg style="left:436px;top:152.5px;" width="9" height="10" viewBox="0 0 9 10"><path d="M0.1 0.4 L0.1 9.6 L8.2 5 Z" fill="#6f6f6f"/></svg>
<svg style="left:449px;top:149px;" width="16" height="16" viewBox="0 0 16 16"><circle cx="8" cy="8" r="6.5" fill="#a5ef5a"/><path d="M8 8 V1.5 A6.5 6.5 0 0 1 14.5 8 Z" fill="#2e2e2e"/><path d="M8 8 V14.5 A6.5 6.5 0 0 1 1.5 8 Z" fill="#2e2e2e"/><circle cx="8" cy="8" r="6.5" fill="none" stroke="#a5ef5a" stroke-width="1.4"/></svg>
<span class="t " style="left:489.5px;top:150px;line-height:16px;font-size:12px;font-weight:700;color:#cecece;letter-spacing:0.055px;">Rigidbody</span>
<svg style="left:768px;top:152px;" width="11" height="11" viewBox="0 0 11 11"><circle cx="5.1" cy="5.1" r="5" fill="#c4c4c4"/><text x="5.1" y="8.1" font-size="8.2" font-weight="700" text-anchor="middle" fill="#3e3e3e" font-family="Liberation Sans, sans-serif">?</text></svg>
<svg style="left:788px;top:152px;" width="11" height="11" viewBox="0 0 11 11"><path d="M0.4 2.1 H5.6 M9 2.1 H10.4 M0.3 7.4 H1.9 M5 7.4 H10.4" stroke="#c4c4c4" stroke-width="1.2"/><path d="M7.3 0 V4.6 M3.6 5 V10" stroke="#c4c4c4" stroke-width="1.7"/></svg>
<svg style="left:811.6px;top:151.8px;" width="3" height="11" viewBox="0 0 3 11"><rect x="0.4" y="0" width="2.2" height="2.3" rx="0.4" fill="#c4c4c4"/><rect x="0.4" y="4" width="2.2" height="2.3" rx="0.4" fill="#c4c4c4"/><rect x="0.4" y="8" width="2.2" height="2.3" rx="0.4" fill="#c4c4c4"/></svg>
<div style="left:429px;top:168px;width:397px;height:1px;background:#1a1a1a;"></div>
<div style="left:429px;top:169px;width:397px;height:21px;background:#3e3e3e;"></div>
<svg style="left:436px;top:174.5px;" width="9" height="10" viewBox="0 0 9 10"><path d="M0.1 0.4 L0.1 9.6 L8.2 5 Z" fill="#6f6f6f"/></svg>
<svg style="left:449px;top:171px;" width="16" height="16" viewBox="0 0 16 16"><path d="M3 1 H9.6 L14 5.2 V14.4 a0.6 0.6 0 0 1 -0.6 0.6 H2.6 a0.6 0.6 0 0 1 -0.6 -0.6 V2 a1 1 0 0 1 1 -1 Z" fill="#f2f2f2"/><path d="M9.6 1 V5.2 H14 Z" fill="#dedede"/><text x="7.6" y="13" font-size="12.5" font-weight="700" text-anchor="middle" fill="#1c6b2f" font-family="Liberation Sans, sans-serif">#</text></svg>
<div style="left:469px;top:172px;width:14px;height:14px;background:#2a2a2a;border-radius:3px;box-shadow:inset 0 0 0 1px #202020, inset 0 1px 0 0 #161616;"></div>
<svg style="left:469px;top:172px;" width="14" height="14" viewBox="0 0 14 14"><path d="M3.1 7.1 L5.9 9.3 L11 4.3" fill="none" stroke="#e4e4e4" stroke-width="1.5"/></svg>
<span class="t " style="left:489.5px;top:172px;line-height:16px;font-size:12px;font-weight:700;color:#cecece;letter-spacing:0.17px;">TopDown Controller 3D</span>
<svg style="left:768px;top:174px;" width="11" height="11" viewBox="0 0 11 11"><circle cx="5.1" cy="5.1" r="5" fill="#c4c4c4"/><text x="5.1" y="8.1" font-size="8.2" font-weight="700" text-anchor="middle" fill="#3e3e3e" font-family="Liberation Sans, sans-serif">?</text></svg>
<svg style="left:788px;top:174px;" width="11" height="11" viewBox="0 0 11 11"><path d="M0.4 2.1 H5.6 M9 2.1 H10.4 M0.3 7.4 H1.9 M5 7.4 H10.4" stroke="#c4c4c4" stroke-width="1.2"/><path d="M7.3 0 V4.6 M3.6 5 V10" stroke="#c4c4c4" stroke-width="1.7"/></svg>
<svg style="left:811.6px;top:173.8px;" width="3" height="11" viewBox="0 0 3 11"><rect x="0.4" y="0" width="2.2" height="2.3" rx="0.4" fill="#c4c4c4"/><rect x="0.4" y="4" width="2.2" height="2.3" rx="0.4" fill="#c4c4c4"/><rect x="0.4" y="8" width="2.2" height="2.3" rx="0.4" fill="#c4c4c4"/></svg>
<div style="left:429px;top:190px;width:397px;height:1px;background:#1a1a1a;"></div>
<div style="left:429px;top:191px;width:397px;height:21px;background:#3e3e3e;"></div>
<svg style="left:434.5px;top:198.0px;" width="10" height="8" viewBox="0 0 10 8"><path d="M0.5 0.3 L9.5 0.3 L5 7.8 Z" fill="#6f6f6f"/></svg>
<svg style="left:449px;top:193px;" width="16" height="16" viewBox="0 0 16 16"><path d="M3 1 H9.6 L14 5.2 V14.4 a0.6 0.6 0 0 1 -0.6 0.6 H2.6 a0.6 0.6 0 0 1 -0.6 -0.6 V2 a1 1 0 0 1 1 -1 Z" fill="#f2f2f2"/><path d="M9.6 1 V5.2 H14 Z" fill="#dedede"/><text x="7.6" y="13" font-size="12.5" font-weight="700" text-anchor="middle" fill="#1c6b2f" font-family="Liberation Sans, sans-serif">#</text></svg>
<div style="left:469px;top:194px;width:14px;height:14px;background:#2a2a2a;border-radius:3px;box-shadow:inset 0 0 0 1px #202020, inset 0 1px 0 0 #161616;"></div>
<svg style="left:469px;top:194px;" width="14" height="14" viewBox="0 0 14 14"><path d="M3.1 7.1 L5.9 9.3 L11 4.3" fill="none" stroke="#e4e4e4" stroke-width="1.5"/></svg>
<span class="t " style="left:489.5px;top:194px;line-height:16px;font-size:12px;font-weight:700;color:#cecece;letter-spacing:0.17px;">Character</span>
<svg style="left:768px;top:196px;" width="11" height="11" viewBox="0 0 11 11"><circle cx="5.1" cy="5.1" r="5" fill="#c4c4c4"/><text x="5.1" y="8.1" font-size="8.2" font-weight="700" text-anchor="middle" fill="#3e3e3e" font-family="Liberation Sans, sans-serif">?</text></svg>
<svg style="left:788px;top:196px;" width="11" height="11" viewBox="0 0 11 11"><path d="M0.4 2.1 H5.6 M9 2.1 H10.4 M0.3 7.4 H1.9 M5 7.4 H10.4" stroke="#c4c4c4" stroke-width="1.2"/><path d="M7.3 0 V4.6 M3.6 5 V10" stroke="#c4c4c4" stroke-width="1.7"/></svg>
<svg style="left:811.6px;top:195.8px;" width="3" height="11" viewBox="0 0 3 11"><rect x="0.4" y="0" width="2.2" height="2.3" rx="0.4" fill="#c4c4c4"/><rect x="0.4" y="4" width="2.2" height="2.3" rx="0.4" fill="#c4c4c4"/><rect x="0.4" y="8" width="2.2" height="2.3" rx="0.4" fill="#c4c4c4"/></svg>
<span class="t " style="left:448.5px;top:218px;line-height:16px;font-size:12px;font-weight:400;color:#7f7f7f;letter-spacing:0.3px;">Script</span>
<div class="field" style="left:588.5px;top:216px;width:233.5px;height:18px;box-shadow:inset 0 0 0 1px #272727, inset 0 1px 0 0 #1f1f1f;"></div>
<svg style="left:592.6px;top:221px;" width="9" height="10" viewBox="0 0 9 10"><path d="M0.9 0.2 H5.6 L8.6 3.2 V9.4 a0.5 0.5 0 0 1 -0.5 0.5 H0.9 a0.5 0.5 0 0 1 -0.5 -0.5 V0.7 a0.5 0.5 0 0 1 0.5 -0.5 Z" fill="#9c9c9c"/><text x="4.4" y="8.8" font-size="8.6" font-weight="700" text-anchor="middle" fill="#2c7540" font-family="Liberation Sans, sans-serif">#</text></svg>
<span class="t " style="left:604.3px;top:218px;line-height:16px;font-size:12px;font-weight:400;color:#7f7f7f;letter-spacing:0.414px;">Character</span>
<div style="left:803px;top:217px;width:18px;height:16px;background:#313131;border-radius:0 2px 2px 0;"></div>
<svg style="left:806.5px;top:219.5px;" width="11" height="11" viewBox="0 0 11 11"><circle cx="5.5" cy="5.5" r="4.6" fill="none" stroke="#8a8a8a" stroke-width="1"/><circle cx="5.5" cy="5.5" r="1.4" fill="#8a8a8a"/></svg>
<span class="t " style="left:448.5px;top:238px;line-height:16px;font-size:12px;font-weight:400;color:#7f7f7f;letter-spacing:0.255px;">Character Dimension</span>
<div style="left:589px;top:236.6px;width:233px;height:16.6px;background:#464646;border-radius:3px;box-shadow:0 0.6px 0 0 #303030;"></div>
<span class="t " style="left:592.4px;top:237px;line-height:16px;font-size:12px;font-weight:400;color:#888888;letter-spacing:0.368px;">Type 2D</span>
<svg style="left:808.3px;top:242.8px;" width="8" height="5" viewBox="0 0 8 5"><path d="M0.2 0.3 L7.8 0.3 L4 4.8 Z" fill="#8a8a8a"/></svg>
<div style="left:447px;top:256px;width:375px;height:65.5px;background:#404040;border-radius:3px;box-shadow:inset 0 0 0 1px #232323;"></div>
<svg style="left:453.1px;top:277px;" width="24" height="26.4" viewBox="0 0 24 26.4"><ellipse cx="11.50" cy="11.20" rx="11.50" ry="11.20" fill="#ececec"/><path d="M14.26 21.28 L21.51 25.00 L21.39 15.68 Z" fill="#ececec"/><path d="M10.12 3.36 H13.57 L13.00 14.11 H10.70 Z" fill="#3a3a3a"/><rect x="10.28" y="15.23" width="3.13" height="3.36" rx="1.15" fill="#3a3a3a"/></svg>
<span class="t" style="left:481.5px;top:259px;line-height:13px;font-size:10px;color:#c8c8c8;letter-spacing:0.432px;word-spacing:-0.3px;">The Character script is the mandatory basis for all Character abilities.</span>
<span class="t" style="left:481.5px;top:271px;line-height:13px;font-size:10px;color:#c8c8c8;letter-spacing:0.53px;word-spacing:-0.3px;">Your character can either be a Non Player Character, controlled by</span>
<span class="t" style="left:481.5px;top:283px;line-height:13px;font-size:10px;color:#c8c8c8;letter-spacing:0.478px;word-spacing:-0.3px;">an AI, or a Player character, controlled by the player. In this case,</span>
<span class="t" style="left:481.5px;top:295px;line-height:13px;font-size:10px;color:#c8c8c8;letter-spacing:0.467px;word-spacing:-0.3px;">you'll need to specify a PlayerID, which must match the one specified</span>
<span class="t" style="left:481.5px;top:307px;line-height:13px;font-size:10px;color:#c8c8c8;letter-spacing:0.355px;word-spacing:-0.3px;">in your InputManager. Usually 'Player1', 'Player2', etc.</span>
<span class="t " style="left:448.5px;top:329px;line-height:16px;font-size:12px;font-weight:400;color:#c4c4c4;letter-spacing:0.382px;">Character Type</span>
<div class="drop" style="left:589px;top:327.8px;width:233px;height:16.4px;"></div>
<span class="t " style="left:592.5px;top:328px;line-height:16px;font-size:12px;font-weight:400;color:#e4e4e4;letter-spacing:0.3px;">Player</span>
<svg style="left:808.3px;top:333.6px;" width="8" height="5" viewBox="0 0 8 5"><path d="M0.2 0.3 L7.8 0.3 L4 4.8 Z" fill="#d0d0d0"/></svg>
<span class="t " style="left:448.5px;top:359px;line-height:16px;font-size:12px;font-weight:400;color:#c4c4c4;letter-spacing:0.044px;">Player ID</span>
<div class="field" style="left:588.5px;top:357px;width:233.5px;height:18px;"></div>
<span class="t " style="left:592px;top:359px;line-height:16px;font-size:12px;font-weight:400;color:#d2d2d2;letter-spacing:-0.065px;">Player1</span>
<span class="t " style="left:448.5px;top:388px;line-height:16px;font-size:12px;font-weight:700;color:#c8c8c8;letter-spacing:0.09px;">Animator</span>
<div style="left:447px;top:404.5px;width:375px;height:52.5px;background:#404040;border-radius:3px;box-shadow:inset 0 0 0 1px #232323;"></div>
<svg style="left:453px;top:416.9px;" width="27.1" height="29.9" viewBox="0 0 27.1 29.9"><ellipse cx="13.05" cy="12.95" rx="13.05" ry="12.95" fill="#ececec"/><path d="M16.18 24.60 L24.40 28.50 L24.27 18.13 Z" fill="#ececec"/><path d="M11.48 3.88 H15.40 L14.75 16.32 H12.14 Z" fill="#3a3a3a"/><rect x="11.67" y="17.61" width="3.55" height="3.88" rx="1.31" fill="#3a3a3a"/></svg>
<span class="t" style="left:484.5px;top:407px;line-height:13px;font-size:10px;color:#c8c8c8;letter-spacing:0.484px;word-spacing:-0.3px;">The engine will try and find an animator for this character. If it's on</span>
<span class="t" style="left:484.5px;top:419px;line-height:13px;font-size:10px;color:#c8c8c8;letter-spacing:0.48px;word-spacing:-0.3px;">the same gameobject it should have found it. If it's nested</span>
<span class="t" style="left:484.5px;top:431px;line-height:13px;font-size:10px;color:#c8c8c8;letter-spacing:0.461px;word-spacing:-0.3px;">somewhere, you'll need to bind it below. You can also decide to get</span>
<span class="t" style="left:484.5px;top:443px;line-height:13px;font-size:10px;color:#c8c8c8;letter-spacing:0.476px;word-spacing:-0.3px;">rid of it altogether, in that case, just uncheck 'use mecanim'.</span>
<span class="t " style="left:448.5px;top:465px;line-height:16px;font-size:12px;font-weight:400;color:#7fb0fc;letter-spacing:0.3px;">Character Animator</span>
<div style="left:588px;top:463px;width:234px;height:18px;background:#2a2a2a;border-radius:3px;box-shadow:inset 0 0 0 1.3px #3a79bb;"></div>
<div style="left:803px;top:464.5px;width:17.5px;height:15px;background:#373737;border-radius:0 2px 2px 0;"></div>
<svg style="left:592px;top:467px;" width="11" height="11" viewBox="0 0 11 11"><path d="M0.8 1.6 Q2.4 5.2 5.2 5.6 H8" fill="none" stroke="#d0d0d0" stroke-width="1.3"/><path d="M7.4 3.8 L10 5.6 L7.4 7.4 Z" fill="#d0d0d0"/><path d="M4.6 5.8 Q2.2 6.4 1.4 9.6" fill="none" stroke="#49c8aa" stroke-width="1.3"/></svg>
<span class="t " style="left:604.5px;top:465px;line-height:16px;font-size:12px;font-weight:400;color:#d8d8d8;letter-spacing:0.3px;">PlayerModel (Animator)</span>
<svg style="left:806.5px;top:467px;" width="11" height="11" viewBox="0 0 11 11"><circle cx="5.5" cy="5.5" r="4.6" fill="none" stroke="#c4c4c4" stroke-width="1"/><circle cx="5.5" cy="5.5" r="1.4" fill="#c4c4c4"/></svg>
<span class="t " style="left:448.5px;top:495px;line-height:16px;font-size:12px;font-weight:400;color:#c4c4c4;letter-spacing:0.3px;">Use Default Mecanim</span>
<div style="left:588px;top:495px;width:14px;height:14px;background:#2a2a2a;border-radius:3px;box-shadow:inset 0 0 0 1px #202020, inset 0 1px 0 0 #161616;"></div>
<svg style="left:588px;top:495px;" width="14" height="14" viewBox="0 0 14 14"><path d="M3.1 7.1 L5.9 9.3 L11 4.3" fill="none" stroke="#e4e4e4" stroke-width="1.5"/></svg>
</div></body></html>
